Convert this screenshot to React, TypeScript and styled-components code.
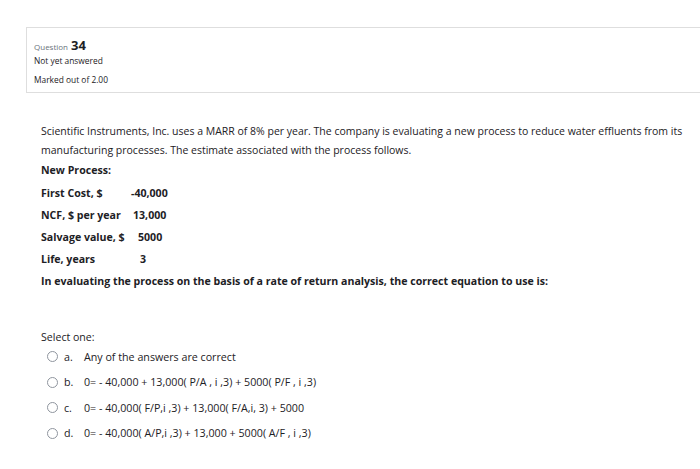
import React from "react";
import styled, { createGlobalStyle } from "styled-components";

const Global = createGlobalStyle`
  html, body {
    margin: 0;
    padding: 0;
    background: #ffffff;
  }
  body {
    font-family: "Open Sans", "Noto Sans", "Liberation Sans", sans-serif;
    color: #1d2125;
  }
`;

const Page = styled.div`
  width: 700px;
  height: 469px;
  overflow: hidden;
  padding-top: 27px;
  box-sizing: border-box;
`;

const InfoBox = styled.div`
  margin-left: 26px;
  width: 700px;
  height: 66px;
  box-sizing: border-box;
  border: 1px solid #dedede;
  background: #fff;
  padding: 8px 0 0 7px;
`;

const QuestionLine = styled.div`
  display: flex;
  align-items: baseline;
  gap: 3px;
  height: 19px;
`;

const QLabel = styled.span`
  font-size: 8px;
  color: #6a737b;
`;

const QNum = styled.span`
  font-size: 13px;
  font-weight: 700;
  color: #1d2125;
`;

const Meta = styled.div<{ $gap: number }>`
  font-size: 8.4px;
  color: #1d2125;
  margin-top: ${(p) => p.$gap}px;
`;

const Body = styled.div`
  padding: 29px 0 0 41px;
`;

const Para = styled.p`
  margin: 0;
  font-size: 10.5px;
  line-height: 19px;
`;

const Row = styled.div<{ $gap: number }>`
  font-size: 10.6px;
  font-weight: 700;
  line-height: 15px;
  margin-top: ${(p) => p.$gap}px;
  display: flex;
`;

const Label = styled.span<{ $w: number }>`
  display: inline-block;
  width: ${(p) => p.$w}px;
`;

const SelectTitle = styled.div`
  font-size: 10.6px;
  margin-top: 41px;
`;

const Options = styled.div`
  display: flex;
  flex-direction: column;
  gap: 10.5px;
  margin-top: 5px;
`;

const Option = styled.label`
  display: flex;
  align-items: center;
  font-size: 10.7px;
  height: 15px;
`;

const Radio = styled.span`
  width: 11px;
  height: 11px;
  border: 1px solid #8f959e;
  border-radius: 50%;
  margin-left: 6px;
  box-sizing: border-box;
  flex-shrink: 0;
`;

const Letter = styled.span`
  margin-left: 6px;
  width: 20px;
`;

const answers = [
  { l: "a.", t: "Any of the answers are correct" },
  { l: "b.", t: "0= - 40,000 + 13,000( P/A , i ,3) + 5000( P/F , i ,3)" },
  { l: "c.", t: "0= - 40,000( F/P,i ,3) + 13,000( F/A,i, 3) + 5000" },
  { l: "d.", t: "0= - 40,000( A/P,i ,3) + 13,000 + 5000( A/F , i ,3)" },
];

export default function App() {
  return (
    <Page>
      <Global />
      <InfoBox>
        <QuestionLine>
          <QLabel>Question</QLabel>
          <QNum>34</QNum>
        </QuestionLine>
        <Meta $gap={0}>Not yet answered</Meta>
        <Meta $gap={8}>Marked out of 2.00</Meta>
      </InfoBox>
      <Body>
        <Para>
          Scientific Instruments, Inc. uses a MARR of 8% per year. The company is evaluating a new process to reduce water effluents from its
          manufacturing processes. The estimate associated with the process follows.
        </Para>
        <Row $gap={3}>New Process:</Row>
        <Row $gap={8}>
          <Label $w={90}>First Cost, $</Label>
          <span>-40,000</span>
        </Row>
        <Row $gap={7}>
          <Label $w={92}>NCF, $ per year</Label>
          <span>13,000</span>
        </Row>
        <Row $gap={7}>
          <Label $w={97}>Salvage value, $</Label>
          <span>5000</span>
        </Row>
        <Row $gap={7}>
          <Label $w={99}>Life, years</Label>
          <span>3</span>
        </Row>
        <Row $gap={7}>
          In evaluating the process on the basis of a rate of return analysis, the correct equation to use is:
        </Row>
        <SelectTitle>Select one:</SelectTitle>
        <Options>
          {answers.map((a) => (
            <Option key={a.l}>
              <Radio />
              <Letter>{a.l}</Letter>
              <span>{a.t}</span>
            </Option>
          ))}
        </Options>
      </Body>
    </Page>
  );
}
